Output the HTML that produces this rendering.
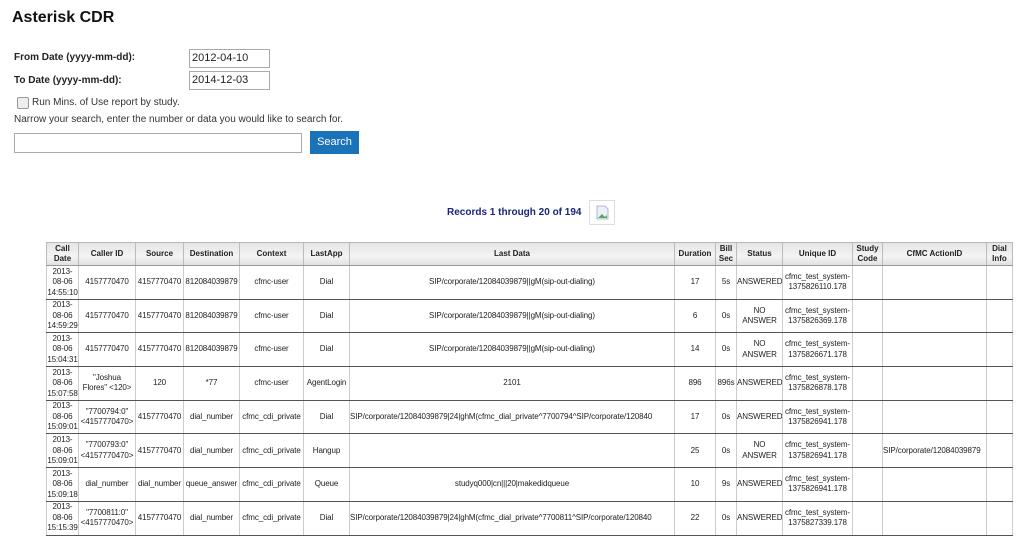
<!DOCTYPE html>
<html><head><meta charset="utf-8">
<style>
body{margin:0;width:1024px;height:552px;background:#fff;font-family:"Liberation Sans",Arial,sans-serif;position:relative;overflow:hidden;color:#222}
.a{position:absolute;white-space:nowrap}
h1{position:absolute;left:12px;top:9px;margin:0;font-size:16px;font-weight:bold;color:#111}
.lbl{font-size:10px;font-weight:bold;color:#222}
.inp{position:absolute;border:1px solid #aaa;background:#fff;font-size:11px;padding-left:2px;box-sizing:border-box;line-height:17px}
table{position:absolute;left:46px;top:242px;border-collapse:collapse;table-layout:fixed;width:966px;font-size:8px;color:#222;border:1px solid #999}
th{background:linear-gradient(#e6e6e6,#f4f4f4 60%,#e0e0e0);font-weight:bold;height:22px;border:1px solid #bbb;border-bottom:1px solid #999;padding:0;line-height:10px;font-size:8px}
td{border-left:1px solid #ccc;border-right:1px solid #ccc;border-bottom:1.5px solid #555;text-align:center;padding:0;height:32.7px;line-height:10.5px;overflow:hidden;white-space:nowrap;letter-spacing:-0.1px}
</style></head><body>
<h1>Asterisk CDR</h1>
<div class="a lbl" style="left:14px;top:52px">From Date (yyyy-mm-dd):</div>
<div class="a lbl" style="left:14px;top:75px">To Date (yyyy-mm-dd):</div>
<div class="inp" style="left:189px;top:49px;width:81px;height:19px">2012-04-10</div>
<div class="inp" style="left:189px;top:71px;width:81px;height:19px">2014-12-03</div>
<div class="a" style="left:17px;top:97px;width:10px;height:10px;border:1px solid #999;border-radius:2px;background:#eee"></div>
<div class="a" style="left:32px;top:97px;font-size:10px;color:#333">Run Mins. of Use report by study.</div>
<div class="a" style="left:14px;top:114px;font-size:10px;color:#333">Narrow your search, enter the number or data you would like to search for.</div>
<div class="inp" style="left:14px;top:133px;width:288px;height:20px"></div>
<div class="a" style="left:310px;top:131px;width:49px;height:23px;background:#1a72b8;color:#fff;font-size:11px;line-height:23px;text-align:center">Search</div>
<div class="a" style="left:447px;top:207px;font-size:10px;font-weight:bold;color:#1a237e">Records 1 through 20 of 194</div>
<div class="a" style="left:589px;top:200px;width:26px;height:25px;border:1px solid #ddd;box-sizing:border-box"><svg width="24" height="23"><path d="M7 5h8l3 3v10H7z" fill="#eef" stroke="#9ab" stroke-width=".8"/><path d="M8 17l4-4 3 3 2-2v3z" fill="#5a5"/></svg></div>
<table>
<colgroup><col style="width:32px"><col style="width:57px"><col style="width:48px"><col style="width:56px"><col style="width:64px"><col style="width:46px"><col style="width:325px"><col style="width:41px"><col style="width:21px"><col style="width:46px"><col style="width:70px"><col style="width:30px"><col style="width:104px"><col style="width:26px"></colgroup>
<tr><th>Call<br>Date</th><th>Caller ID</th><th>Source</th><th>Destination</th><th>Context</th><th>LastApp</th><th>Last Data</th><th>Duration</th><th>Bill<br>Sec</th><th>Status</th><th>Unique ID</th><th>Study<br>Code</th><th>CfMC ActionID</th><th>Dial<br>Info</th></tr>
<tr><td>2013-<br>08-06<br>14:55:10</td><td>4157770470</td><td>4157770470</td><td>812084039879</td><td>cfmc-user</td><td>Dial</td><td>SIP/corporate/12084039879||gM(sip-out-dialing)</td><td>17</td><td>5s</td><td>ANSWERED</td><td>cfmc_test_system-<br>1375826110.178</td><td></td><td></td><td></td></tr>
<tr><td>2013-<br>08-06<br>14:59:29</td><td>4157770470</td><td>4157770470</td><td>812084039879</td><td>cfmc-user</td><td>Dial</td><td>SIP/corporate/12084039879||gM(sip-out-dialing)</td><td>6</td><td>0s</td><td>NO<br>ANSWER</td><td>cfmc_test_system-<br>1375826369.178</td><td></td><td></td><td></td></tr>
<tr><td>2013-<br>08-06<br>15:04:31</td><td>4157770470</td><td>4157770470</td><td>812084039879</td><td>cfmc-user</td><td>Dial</td><td>SIP/corporate/12084039879||gM(sip-out-dialing)</td><td>14</td><td>0s</td><td>NO<br>ANSWER</td><td>cfmc_test_system-<br>1375826671.178</td><td></td><td></td><td></td></tr>
<tr><td>2013-<br>08-06<br>15:07:58</td><td>"Joshua<br>Flores" &lt;120&gt;</td><td>120</td><td>*77</td><td>cfmc-user</td><td>AgentLogin</td><td>2101</td><td>896</td><td>896s</td><td>ANSWERED</td><td>cfmc_test_system-<br>1375826878.178</td><td></td><td></td><td></td></tr>
<tr><td>2013-<br>08-06<br>15:09:01</td><td>"7700794:0"<br>&lt;4157770470&gt;</td><td>4157770470</td><td>dial_number</td><td>cfmc_cdi_private</td><td>Dial</td><td style="text-align:left">SIP/corporate/12084039879|24|ghM(cfmc_dial_private^7700794^SIP/corporate/120840</td><td>17</td><td>0s</td><td>ANSWERED</td><td>cfmc_test_system-<br>1375826941.178</td><td></td><td></td><td></td></tr>
<tr><td>2013-<br>08-06<br>15:09:01</td><td>"7700793:0"<br>&lt;4157770470&gt;</td><td>4157770470</td><td>dial_number</td><td>cfmc_cdi_private</td><td>Hangup</td><td></td><td>25</td><td>0s</td><td>NO<br>ANSWER</td><td>cfmc_test_system-<br>1375826941.178</td><td></td><td style="text-align:left">SIP/corporate/12084039879</td><td></td></tr>
<tr><td>2013-<br>08-06<br>15:09:18</td><td>dial_number</td><td>dial_number</td><td>queue_answer</td><td>cfmc_cdi_private</td><td>Queue</td><td>studyq000|cn|||20|makedidqueue</td><td>10</td><td>9s</td><td>ANSWERED</td><td>cfmc_test_system-<br>1375826941.178</td><td></td><td></td><td></td></tr>
<tr><td>2013-<br>08-06<br>15:15:39</td><td>"7700811:0"<br>&lt;4157770470&gt;</td><td>4157770470</td><td>dial_number</td><td>cfmc_cdi_private</td><td>Dial</td><td style="text-align:left">SIP/corporate/12084039879|24|ghM(cfmc_dial_private^7700811^SIP/corporate/120840</td><td>22</td><td>0s</td><td>ANSWERED</td><td>cfmc_test_system-<br>1375827339.178</td><td></td><td></td><td></td></tr>
</table>
</body></html>
